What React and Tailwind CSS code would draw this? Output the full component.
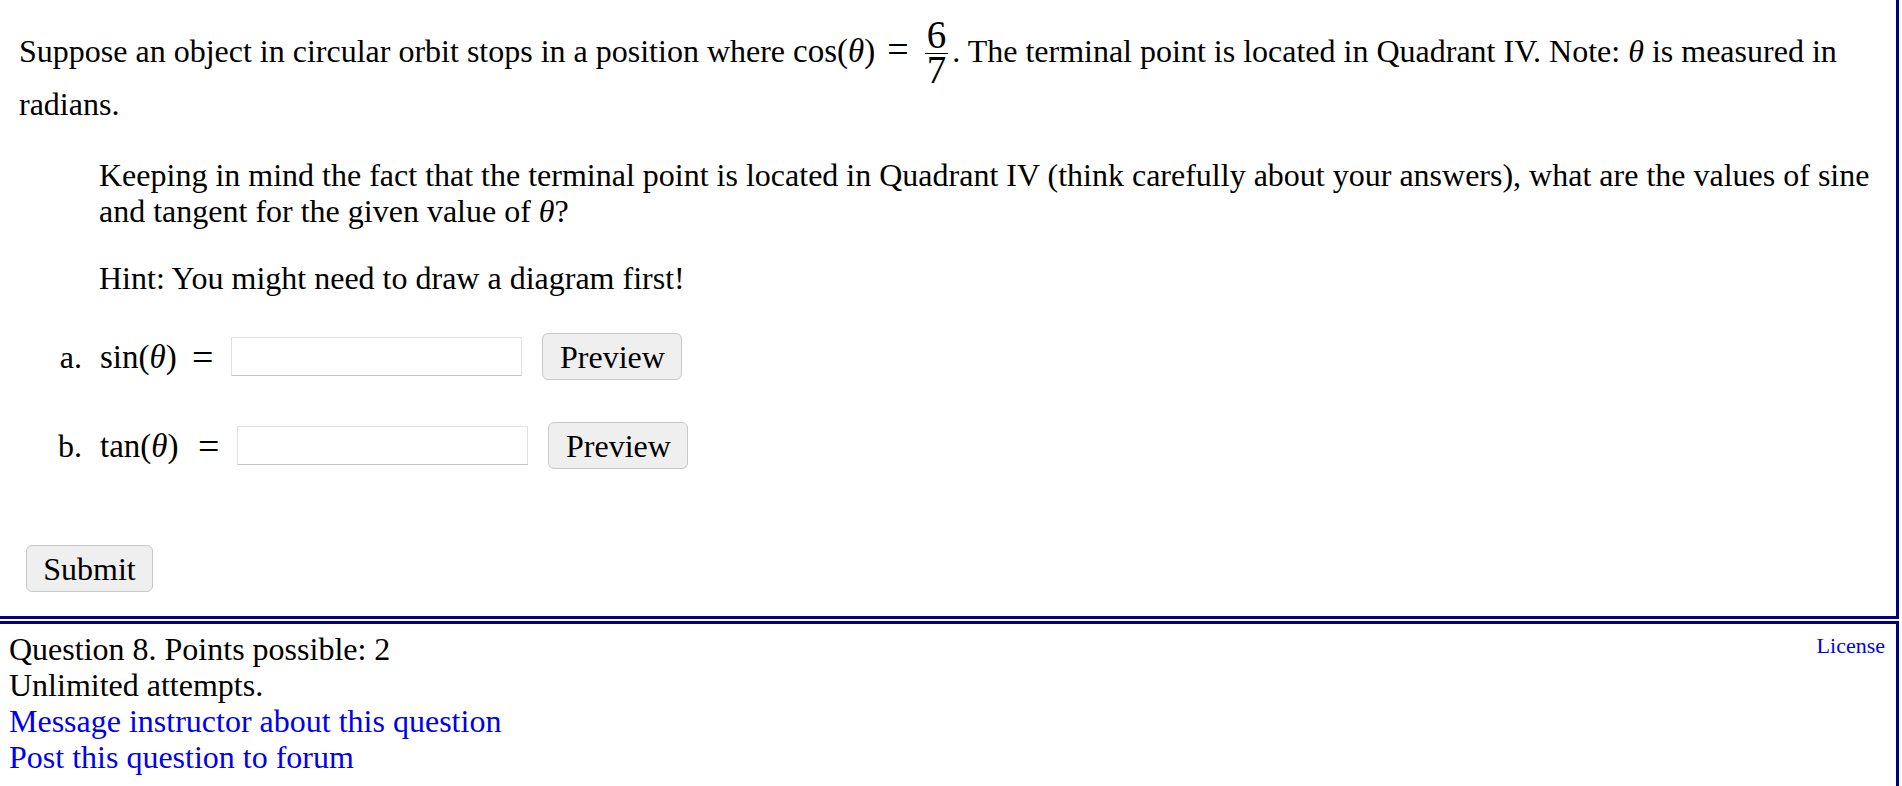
import React from 'react'

function Frac({ top, bottom }) {
  return (
    <span className="inline-flex flex-col items-center align-[14px] mr-[4px]">
      <span className="block text-[39px] leading-[28px] h-[28px] px-[2px]">{top}</span>
      <span className="block w-full mt-[3.5px] h-[1.5px] bg-black" />
      <span className="block text-[39px] leading-[28px] h-[32px] pt-[2px] pb-[2px] px-[2px]">{bottom}</span>
    </span>
  )
}

function Theta() {
  return <i className="italic">θ</i>
}

function AnswerRow({ marker, fn, labelWidth, className }) {
  return (
    <div className={`flex items-center ${className}`}>
      <span className="w-[63px] text-right">{marker}</span>
      <span className="ml-[18px] text-[33px] inline-block" style={{ width: labelWidth }}>
        {fn}(<Theta />)
      </span>
      <span className="text-[38px]">=</span>
      <input
        type="text"
        className="ml-[18px] w-[291px] h-[39px] bg-white border border-[#e0e0e0] border-b-[1.5px] border-b-[#c4c4c4] outline-none"
      />
      <button className="ml-[20px] w-[140px] h-[47px] rounded-[6px] border-[1.5px] border-[#c8c8c8] bg-[#efefef] text-black">
        Preview
      </button>
    </div>
  )
}

export default function App() {
  return (
    <div className="min-h-screen bg-white text-black font-['Liberation_Serif',serif] text-[32px] leading-[36px]">
      {/* question body */}
      <div className="w-[1899px] border-r-[3px] border-b-[3px] border-[#000080] pl-[19px] pt-[21px] pb-[24px]">
        <p>
          Suppose an object in circular orbit stops in a position where{' '}
          <span className="text-[33px]">cos(<Theta />)</span>
          <span className="text-[38px] ml-[12px] mr-[16px]">=</span>
          <Frac top="6" bottom="7" />. The terminal point is located in Quadrant IV. Note: <Theta /> is
          measured in radians.
        </p>

        <div className="ml-[80px] mt-[35px]">
          <p>
            Keeping in mind the fact that the terminal point is located in Quadrant IV (think carefully about
            your answers), what are the values of sine and tangent for the given value of <Theta />?
          </p>
          <p className="mt-[31px]">Hint: You might need to draw a diagram first!</p>
        </div>

        <AnswerRow marker="a." fn="sin" labelWidth={92} className="mt-[37px]" />
        <AnswerRow marker="b." fn="tan" labelWidth={98} className="mt-[42px]" />

        <button className="mt-[76px] ml-[7px] w-[127px] h-[47px] rounded-[6px] border-[1.5px] border-[#c8c8c8] bg-[#efefef] text-black">
          Submit
        </button>
      </div>

      {/* question footer */}
      <div className="mt-[2px] w-[1899px] min-h-[166px] border-t-[3px] border-r-[3px] border-[#000080] pl-[9px] pr-[11px] pt-[7px]">
        <a href="#" className="float-right mt-[2px] text-[22px] leading-[25px] text-[#0000ee]">
          License
        </a>
        <div>
          Question 8. Points possible: 2
          <br />
          Unlimited attempts.
          <br />
          <a href="#" className="text-[#0000ee]">Message instructor about this question</a>
          <br />
          <a href="#" className="text-[#0000ee]">Post this question to forum</a>
        </div>
      </div>
    </div>
  )
}
